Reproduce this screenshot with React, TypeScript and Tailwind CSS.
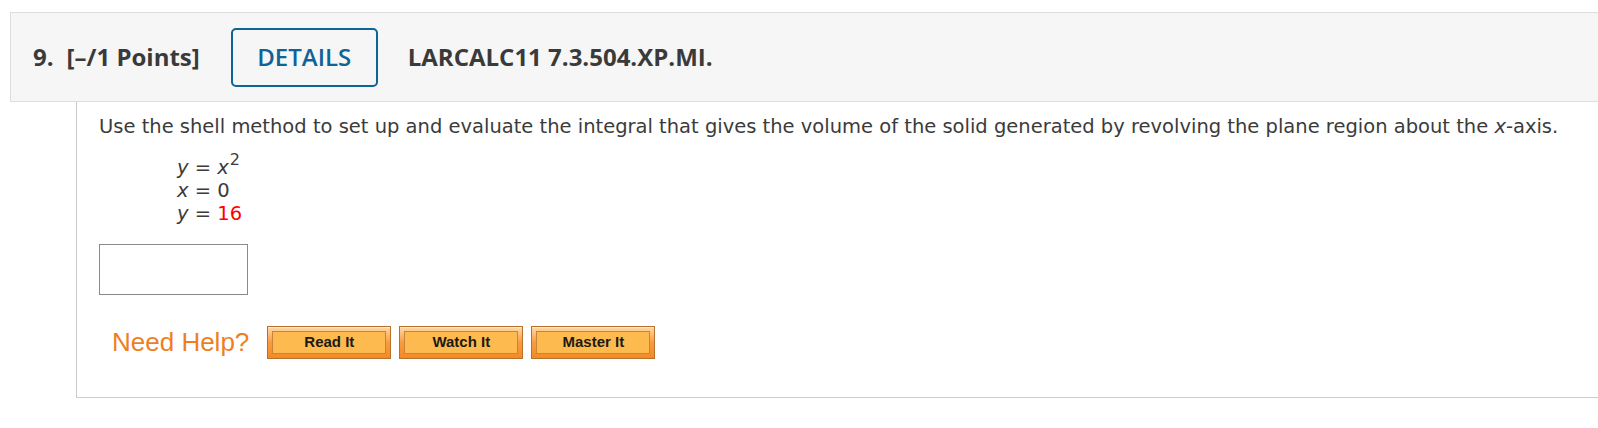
import React from 'react';

function HelpButton({ label }: { label: string }) {
  return (
    <button className="h-[33px] w-[124px] border border-[#b8702e] bg-gradient-to-b from-[#fcd9a8] via-[#f89b3d] to-[#f48a26] p-[4px] shadow-[inset_0_1px_0_#ffe9c9]">
      <span className="flex h-full w-full items-center justify-center border border-[#c9843a] bg-[#fdbb4f] font-['Liberation_Sans',Arial,sans-serif] text-[15px] font-bold text-[#1d1a14]">
        {label}
      </span>
    </button>
  );
}

export default function App() {
  return (
    <div className="h-[428px] w-[1598px] overflow-hidden bg-white pl-[10px] pt-3">
      <div className="flex h-[90px] items-center border border-r-0 border-[#dddddd] bg-[#f6f6f6] pl-[22px] font-['Open_Sans',sans-serif] text-[#3a3a3a]">
        <span className="text-[24px] font-bold">9.</span>
        <span className="ml-[13px] text-[24px] font-bold">[–/1 Points]</span>
        <span className="ml-[31px] flex h-[59px] w-[147px] items-center justify-center rounded-[5px] border-2 border-[#0f6397] text-[24px] font-semibold text-[#0f6397]">
          DETAILS
        </span>
        <span className="ml-[30px] text-[24px] font-bold">LARCALC11 7.3.504.XP.MI.</span>
      </div>

      <div className="ml-[66px] h-[296px] border-b border-l border-[#cccccc] pl-[22px] pt-[13px] font-['DejaVu_Sans',Verdana,sans-serif] text-[#3b3b3b]">
        <p className="text-[19.5px] leading-[24px]">
          Use the shell method to set up and evaluate the integral that gives the volume of the solid generated by revolving the plane region about the <i>x</i>-axis.
        </p>

        <div className="ml-[78px] mt-[17px] text-[19.5px] leading-[23px]">
          <div>
            <i>y</i> = <i>x</i>
            <sup className="relative top-[-9px] ml-[1px] text-[16px] leading-none">2</sup>
          </div>
          <div>
            <i>x</i> = 0
          </div>
          <div>
            <i>y</i> = <span className="text-[#ff0000]">16</span>
          </div>
        </div>

        <div className="mt-[19px] h-[51px] w-[149px] border border-[#8a8a8a] bg-white" />

        <div className="mt-[28px] flex items-center">
          <span className="ml-[13px] mr-[18px] font-['Liberation_Sans',Arial,sans-serif] text-[26px] text-[#ee7f1f]">
            Need Help?
          </span>
          <div className="flex gap-[8px]">
            <HelpButton label="Read It" />
            <HelpButton label="Watch It" />
            <HelpButton label="Master It" />
          </div>
        </div>
      </div>
    </div>
  );
}
